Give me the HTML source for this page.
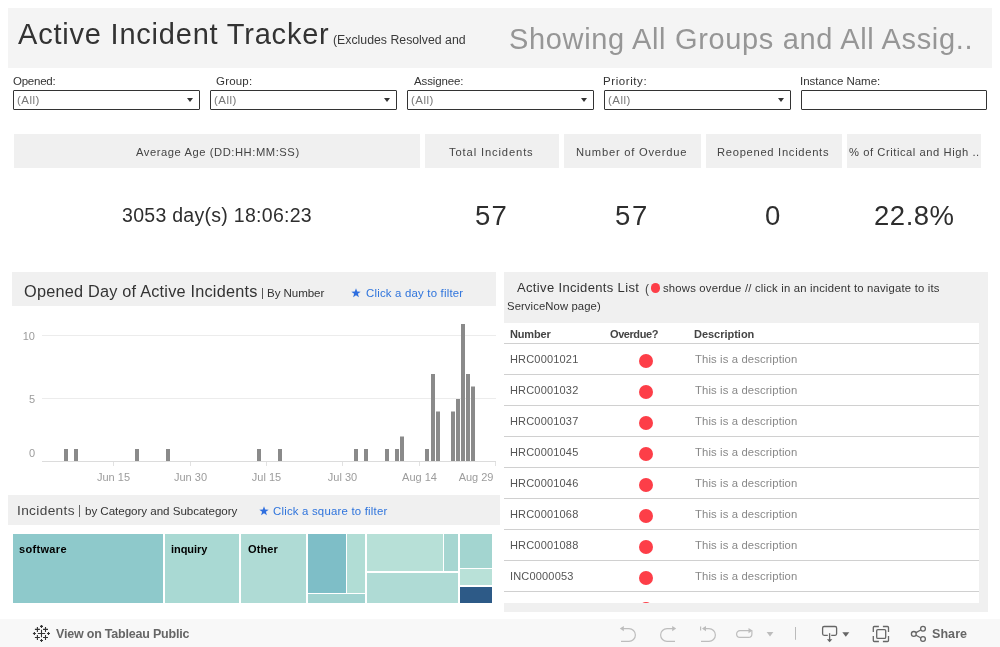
<!DOCTYPE html>
<html><head><meta charset="utf-8">
<style>
*{margin:0;padding:0;box-sizing:border-box}
html,body{width:1000px;height:647px;overflow:hidden;background:#fff}
body{position:relative;font-family:"Liberation Sans",sans-serif;color:#333}
.b{position:absolute}
.t{position:absolute;white-space:pre;line-height:1;will-change:transform}
.fb{position:absolute;top:90px;height:20px;width:187px;border:1px solid #333;border-radius:1px;background:#fff}
.fb i{position:absolute;right:6px;top:7px;width:0;height:0;border-left:3px solid transparent;border-right:3px solid transparent;border-top:4px solid #333}
.dot{position:absolute;width:14px;height:14px;border-radius:50%;background:#fd3e48}
</style></head>
<body>
<div class="b" style="left:8px;top:8px;width:984px;height:60px;background:#f4f4f4"></div>
<div class="t" style="left:18.00px;top:20.00px;font-size:29px;letter-spacing:0.791px;color:#333;">Active Incident Tracker</div>
<div class="t" style="left:333.20px;top:34.20px;font-size:12.3px;letter-spacing:0.000px;color:#3a3a3a;">(Excludes Resolved and</div>
<div class="t" style="left:508.50px;top:25.00px;font-size:29px;letter-spacing:0.661px;color:#969696;">Showing All Groups and All Assig..</div>
<div class="t" style="left:12.50px;top:76.00px;font-size:11.5px;letter-spacing:-0.233px;color:#333;">Opened:</div>
<div class="t" style="left:215.50px;top:76.00px;font-size:11.5px;letter-spacing:0.200px;color:#333;">Group:</div>
<div class="t" style="left:413.80px;top:76.00px;font-size:11.5px;letter-spacing:-0.125px;color:#333;">Assignee:</div>
<div class="t" style="left:602.60px;top:76.00px;font-size:11.5px;letter-spacing:0.575px;color:#333;">Priority:</div>
<div class="t" style="left:799.80px;top:76.00px;font-size:11.5px;letter-spacing:-0.023px;color:#333;">Instance Name:</div>
<div class="fb" style="left:13px"><i></i></div>
<div class="fb" style="left:210px"><i></i></div>
<div class="fb" style="left:407px"><i></i></div>
<div class="fb" style="left:604px"><i></i></div>
<div class="fb" style="left:801px;width:186px"></div>
<div class="t" style="left:16.70px;top:95.00px;font-size:11.5px;letter-spacing:0.450px;color:#777;">(All)</div>
<div class="t" style="left:213.50px;top:95.00px;font-size:11.5px;letter-spacing:0.500px;color:#777;">(All)</div>
<div class="t" style="left:410.60px;top:95.00px;font-size:11.5px;letter-spacing:0.450px;color:#777;">(All)</div>
<div class="t" style="left:607.60px;top:95.00px;font-size:11.5px;letter-spacing:0.450px;color:#777;">(All)</div>
<div class="b" style="left:14px;top:134px;width:406px;height:34px;background:#f0f0f0"></div>
<div class="b" style="left:425px;top:134px;width:134px;height:34px;background:#f0f0f0"></div>
<div class="b" style="left:564px;top:134px;width:137px;height:34px;background:#f0f0f0"></div>
<div class="b" style="left:706px;top:134px;width:136px;height:34px;background:#f0f0f0"></div>
<div class="b" style="left:847px;top:134px;width:134px;height:34px;background:#f0f0f0"></div>
<div class="t" style="left:135.80px;top:146.80px;font-size:11.2px;letter-spacing:0.562px;color:#444;">Average Age (DD:HH:MM:SS)</div>
<div class="t" style="left:449.10px;top:146.80px;font-size:11.2px;letter-spacing:0.871px;color:#444;">Total Incidents</div>
<div class="t" style="left:576.30px;top:146.80px;font-size:11.2px;letter-spacing:0.763px;color:#444;">Number of Overdue</div>
<div class="t" style="left:717.30px;top:146.80px;font-size:11.2px;letter-spacing:0.706px;color:#444;">Reopened Incidents</div>
<div class="t" style="left:849.40px;top:146.80px;font-size:11.2px;letter-spacing:0.554px;color:#444;">% of Critical and High ..</div>
<div class="t" style="left:121.50px;top:206.00px;font-size:19.5px;letter-spacing:0.284px;color:#2e2e2e;">3053 day(s) 18:06:23</div>
<div class="t" style="left:474.50px;top:201.80px;font-size:27.5px;letter-spacing:1.200px;color:#2e2e2e;">57</div>
<div class="t" style="left:615.40px;top:202.00px;font-size:27.5px;letter-spacing:1.600px;color:#2e2e2e;">57</div>
<div class="t" style="left:764.80px;top:202.30px;font-size:27.5px;letter-spacing:0.000px;color:#2e2e2e;">0</div>
<div class="t" style="left:874.40px;top:202.00px;font-size:27.5px;letter-spacing:0.525px;color:#2e2e2e;">22.8%</div>
<div class="b" style="left:12px;top:272px;width:484px;height:34px;background:#f0f0f0"></div>
<div class="t" style="left:23.50px;top:282.70px;font-size:16.3px;letter-spacing:0.214px;color:#333;">Opened Day of Active Incidents</div>
<div class="b" style="left:261.5px;top:288px;width:1px;height:11px;background:#555"></div>
<div class="t" style="left:266.70px;top:287.30px;font-size:11.6px;letter-spacing:-0.087px;color:#333;">By Number</div>
<div class="t" style="left:365.60px;top:288.30px;font-size:11.4px;letter-spacing:0.205px;color:#2f74dc;">Click a day to filter</div>
<svg class="b" style="left:351px;top:288px" width="10" height="10" viewBox="0 0 10 10"><path d="M5 0.3 L6.2 3.6 L9.7 3.7 L6.9 5.8 L7.9 9.3 L5 7.2 L2.1 9.3 L3.1 5.8 L0.3 3.7 L3.8 3.6 Z" fill="#2f6fdf"/></svg>
<svg class="b" style="left:0;top:306px;will-change:transform;font-family:'Liberation Sans',sans-serif" width="500" height="184" viewBox="0 306 500 184">
<line x1="42" y1="335.5" x2="496" y2="335.5" stroke="#ececec" stroke-width="1"/>
<line x1="42" y1="398.5" x2="496" y2="398.5" stroke="#ececec" stroke-width="1"/>
<rect x="64" y="449.0" width="4" height="12.5" fill="#8a8a8a"/>
<rect x="74" y="449.0" width="4" height="12.5" fill="#8a8a8a"/>
<rect x="135" y="449.0" width="4" height="12.5" fill="#8a8a8a"/>
<rect x="166" y="449.0" width="4" height="12.5" fill="#8a8a8a"/>
<rect x="257" y="449.0" width="4" height="12.5" fill="#8a8a8a"/>
<rect x="278" y="449.0" width="4" height="12.5" fill="#8a8a8a"/>
<rect x="354" y="449.0" width="4" height="12.5" fill="#8a8a8a"/>
<rect x="364" y="449.0" width="4" height="12.5" fill="#8a8a8a"/>
<rect x="385" y="449.0" width="4" height="12.5" fill="#8a8a8a"/>
<rect x="395" y="449.0" width="4" height="12.5" fill="#8a8a8a"/>
<rect x="400" y="436.5" width="4" height="25.0" fill="#8a8a8a"/>
<rect x="425" y="449.0" width="4" height="12.5" fill="#8a8a8a"/>
<rect x="431" y="374.0" width="4" height="87.5" fill="#8a8a8a"/>
<rect x="436" y="411.5" width="4" height="50.0" fill="#8a8a8a"/>
<rect x="451" y="411.5" width="4" height="50.0" fill="#8a8a8a"/>
<rect x="456" y="399.0" width="4" height="62.5" fill="#8a8a8a"/>
<rect x="461" y="324.0" width="4" height="137.5" fill="#8a8a8a"/>
<rect x="466" y="374.0" width="4" height="87.5" fill="#8a8a8a"/>
<rect x="471" y="386.5" width="4" height="75.0" fill="#8a8a8a"/>
<line x1="42" y1="461.5" x2="496" y2="461.5" stroke="#dcdcdc" stroke-width="1"/>
<line x1="113.5" y1="462" x2="113.5" y2="466" stroke="#e2e2e2" stroke-width="1"/>
<text x="113.5" y="480.5" text-anchor="middle" font-size="11" fill="#9c9c9c">Jun 15</text>
<line x1="190.5" y1="462" x2="190.5" y2="466" stroke="#e2e2e2" stroke-width="1"/>
<text x="190.5" y="480.5" text-anchor="middle" font-size="11" fill="#9c9c9c">Jun 30</text>
<line x1="266.5" y1="462" x2="266.5" y2="466" stroke="#e2e2e2" stroke-width="1"/>
<text x="266.5" y="480.5" text-anchor="middle" font-size="11" fill="#9c9c9c">Jul 15</text>
<line x1="342.5" y1="462" x2="342.5" y2="466" stroke="#e2e2e2" stroke-width="1"/>
<text x="342.5" y="480.5" text-anchor="middle" font-size="11" fill="#9c9c9c">Jul 30</text>
<line x1="419.5" y1="462" x2="419.5" y2="466" stroke="#e2e2e2" stroke-width="1"/>
<text x="419.5" y="480.5" text-anchor="middle" font-size="11" fill="#9c9c9c">Aug 14</text>
<line x1="495.5" y1="462" x2="495.5" y2="466" stroke="#e2e2e2" stroke-width="1"/>
<text x="493.5" y="480.5" text-anchor="end" font-size="11" fill="#9c9c9c">Aug 29</text>
<text x="35" y="339.5" text-anchor="end" font-size="11" fill="#9c9c9c">10</text>
<text x="35" y="402.5" text-anchor="end" font-size="11" fill="#9c9c9c">5</text>
<text x="35" y="457" text-anchor="end" font-size="11" fill="#9c9c9c">0</text>

</svg>
<div class="b" style="left:8px;top:495px;width:492px;height:30px;background:#f0f0f0"></div>
<div class="t" style="left:17.40px;top:503.80px;font-size:13.7px;letter-spacing:0.350px;color:#444;">Incidents</div>
<div class="b" style="left:79px;top:505px;width:1px;height:12px;background:#666"></div>
<div class="t" style="left:84.60px;top:504.80px;font-size:11.6px;letter-spacing:-0.038px;color:#333;">by Category and Subcategory</div>
<svg class="b" style="left:259px;top:506px" width="10" height="10" viewBox="0 0 10 10"><path d="M5 0.3 L6.2 3.6 L9.7 3.7 L6.9 5.8 L7.9 9.3 L5 7.2 L2.1 9.3 L3.1 5.8 L0.3 3.7 L3.8 3.6 Z" fill="#2f6fdf"/></svg>
<div class="t" style="left:273.00px;top:505.80px;font-size:11.4px;letter-spacing:0.204px;color:#2f74dc;">Click a square to filter</div>
<div class="b" style="left:13px;top:534px;width:150px;height:69px;background:#8ec9cb"></div>
<div class="b" style="left:165px;top:534px;width:74px;height:69px;background:#a9d9d3"></div>
<div class="b" style="left:241px;top:534px;width:65px;height:69px;background:#afdbd5"></div>
<div class="b" style="left:308px;top:534px;width:38px;height:59px;background:#7ebec7"></div>
<div class="b" style="left:347px;top:534px;width:18px;height:59px;background:#b1ddd5"></div>
<div class="b" style="left:308px;top:594px;width:57px;height:9px;background:#a1d3d0"></div>
<div class="b" style="left:367px;top:534px;width:76px;height:37px;background:#b7e0d7"></div>
<div class="b" style="left:444px;top:534px;width:14px;height:37px;background:#a6d6d1"></div>
<div class="b" style="left:367px;top:573px;width:91px;height:30px;background:#afdbd5"></div>
<div class="b" style="left:460px;top:534px;width:32px;height:34px;background:#a3d5d0"></div>
<div class="b" style="left:460px;top:569px;width:32px;height:16px;background:#b9e1d8"></div>
<div class="b" style="left:460px;top:587px;width:32px;height:16px;background:#2d5a87"></div>
<div class="t" style="left:19.30px;top:543.70px;font-size:11px;font-weight:700;letter-spacing:0.329px;color:#000;">software</div>
<div class="t" style="left:171.40px;top:543.60px;font-size:11px;font-weight:700;letter-spacing:-0.067px;color:#000;">inquiry</div>
<div class="t" style="left:248.40px;top:543.60px;font-size:11px;font-weight:700;letter-spacing:0.100px;color:#000;">Other</div>
<div class="b" style="left:504px;top:272px;width:484px;height:340px;background:#f0f0f0"></div>
<div class="t" style="left:517.20px;top:280.80px;font-size:13px;letter-spacing:0.350px;color:#333;">Active Incidents List</div>
<div class="t" style="left:645px;top:282.5px;font-size:12px;color:#444">(</div>
<div class="t" style="left:662.50px;top:283.00px;font-size:11.3px;letter-spacing:0.198px;color:#333;">shows overdue // click in an incident to navigate to its</div>
<div class="t" style="left:507.40px;top:301.20px;font-size:11.3px;letter-spacing:0.093px;color:#333;">ServiceNow page)</div>
<div class="dot" style="left:650.5px;top:283px;width:9.5px;height:9.5px"></div>
<div class="b" style="left:504px;top:323px;width:475px;height:280px;background:#fff;overflow:hidden">
<div class="b" style="left:0;top:0;width:475px;height:280px">
<div class="t" style="left:5.70px;top:5.80px;font-size:11px;font-weight:700;letter-spacing:-0.160px;color:#444">Number</div>
<div class="t" style="left:106.40px;top:5.80px;font-size:11px;font-weight:700;letter-spacing:-0.429px;color:#444">Overdue?</div>
<div class="t" style="left:189.60px;top:5.80px;font-size:11px;font-weight:700;letter-spacing:-0.020px;color:#444">Description</div>
<div class="b" style="left:0;top:20px;width:475px;height:1px;background:#d0d0d0"></div>
<div class="t" style="left:5.80px;top:30.80px;font-size:11px;letter-spacing:0.178px;color:#555">HRC0001021</div>
<div class="t" style="left:190.80px;top:30.60px;font-size:11.3px;letter-spacing:0.120px;color:#888">This is a description</div>
<div class="dot" style="left:134.5px;top:31px"></div>
<div class="b" style="left:0;top:51px;width:475px;height:1px;background:#d0d0d0"></div>
<div class="t" style="left:5.80px;top:61.80px;font-size:11px;letter-spacing:0.178px;color:#555">HRC0001032</div>
<div class="t" style="left:190.80px;top:61.60px;font-size:11.3px;letter-spacing:0.120px;color:#888">This is a description</div>
<div class="dot" style="left:134.5px;top:62px"></div>
<div class="b" style="left:0;top:82px;width:475px;height:1px;background:#d0d0d0"></div>
<div class="t" style="left:5.80px;top:92.80px;font-size:11px;letter-spacing:0.178px;color:#555">HRC0001037</div>
<div class="t" style="left:190.80px;top:92.60px;font-size:11.3px;letter-spacing:0.120px;color:#888">This is a description</div>
<div class="dot" style="left:134.5px;top:93px"></div>
<div class="b" style="left:0;top:113px;width:475px;height:1px;background:#d0d0d0"></div>
<div class="t" style="left:5.80px;top:123.80px;font-size:11px;letter-spacing:0.178px;color:#555">HRC0001045</div>
<div class="t" style="left:190.80px;top:123.60px;font-size:11.3px;letter-spacing:0.120px;color:#888">This is a description</div>
<div class="dot" style="left:134.5px;top:124px"></div>
<div class="b" style="left:0;top:144px;width:475px;height:1px;background:#d0d0d0"></div>
<div class="t" style="left:5.80px;top:154.80px;font-size:11px;letter-spacing:0.178px;color:#555">HRC0001046</div>
<div class="t" style="left:190.80px;top:154.60px;font-size:11.3px;letter-spacing:0.120px;color:#888">This is a description</div>
<div class="dot" style="left:134.5px;top:155px"></div>
<div class="b" style="left:0;top:175px;width:475px;height:1px;background:#d0d0d0"></div>
<div class="t" style="left:5.80px;top:185.80px;font-size:11px;letter-spacing:0.178px;color:#555">HRC0001068</div>
<div class="t" style="left:190.80px;top:185.60px;font-size:11.3px;letter-spacing:0.120px;color:#888">This is a description</div>
<div class="dot" style="left:134.5px;top:186px"></div>
<div class="b" style="left:0;top:206px;width:475px;height:1px;background:#d0d0d0"></div>
<div class="t" style="left:5.80px;top:216.80px;font-size:11px;letter-spacing:0.178px;color:#555">HRC0001088</div>
<div class="t" style="left:190.80px;top:216.60px;font-size:11.3px;letter-spacing:0.120px;color:#888">This is a description</div>
<div class="dot" style="left:134.5px;top:217px"></div>
<div class="b" style="left:0;top:237px;width:475px;height:1px;background:#d0d0d0"></div>
<div class="t" style="left:5.80px;top:247.80px;font-size:11px;letter-spacing:0.178px;color:#555">INC0000053</div>
<div class="t" style="left:190.80px;top:247.60px;font-size:11.3px;letter-spacing:0.120px;color:#888">This is a description</div>
<div class="dot" style="left:134.5px;top:248px"></div>
<div class="b" style="left:0;top:268px;width:475px;height:1px;background:#d0d0d0"></div>
<div class="t" style="left:5.80px;top:278.80px;font-size:11px;letter-spacing:0.178px;color:#555">INC0000054</div>
<div class="t" style="left:190.80px;top:278.60px;font-size:11.3px;letter-spacing:0.120px;color:#888">This is a description</div>
<div class="dot" style="left:134.5px;top:279px"></div>
<div class="b" style="left:0;top:299px;width:475px;height:1px;background:#d0d0d0"></div>
</div></div>
<div class="b" style="left:0;top:619px;width:1000px;height:28px;background:#f8f8f8"></div>
<svg class="b" style="left:0;top:619px" width="1000" height="28" viewBox="0 619 1000 28">
<g stroke="#333" stroke-width="1.1" fill="none">
<path d="M37.8 633.5h7.4M41.5 629.8v7.4"/>
<path d="M34.9 629.4h5M37.4 626.9v5M43 629.4h5M45.5 626.9v5M34.9 637.5h5M37.4 635v5M43 637.5h5M45.5 635v5"/>
<path d="M40 626.4h3M41.5 624.9v3M40 640.5h3M41.5 639v3M32.9 633.5h3M34.4 632v3M47 633.5h3M48.5 632v3"/>
</g>
<g stroke="#bdbdbd" stroke-width="1.2" fill="none">
<path d="M622 628.6h7a6.4 6.4 0 0 1 0 12.8h-8"/>
<path d="M674 628.6h-7a6.4 6.4 0 0 0 0 12.8h8"/>
<path d="M703 628.6h6a6.4 6.4 0 0 1 0 12.8h-8M700.6 626.6v4"/>
<path d="M749 630.6h-9a3.4 3.4 0 0 0 0 6.8h8.5a3.4 3.4 0 0 0 3.4-3.4v-3.4"/>
</g>
<g fill="#bdbdbd">
<path d="M619.8 628.6l4-2.6v5.2z"/>
<path d="M676.2 628.6l-4-2.6v5.2z"/>
<path d="M702 628.6l4-2.6v5.2z"/>
<path d="M752.5 630.6l-4-2.6v5.2z"/>
<path d="M766.6 632h6.8l-3.4 4.6z"/>
</g>
<path d="M795.5 627v12.8" stroke="#bbb" stroke-width="1"/>
<g stroke="#666" stroke-width="1.3" fill="none">
<path d="M827.8 635.3h-3.7a1.5 1.5 0 0 1 -1.5 -1.5v-5.8a1.5 1.5 0 0 1 1.5 -1.5h11a1.5 1.5 0 0 1 1.5 1.5v5.8a1.5 1.5 0 0 1 -1.5 1.5h-3.9"/>
<path d="M829.6 633.2v7.5"/>
<path d="M873.3 632.1v-4.6a1 1 0 0 1 1-1h4.6M882.9 626.5h4.6a1 1 0 0 1 1 1v4.6M888.5 636v4.5a1 1 0 0 1 -1 1h-4.6M878.9 641.5h-4.6a1 1 0 0 1 -1-1v-4.5"/>
<rect x="876.7" y="629.6" width="9" height="8.8" rx="1.2"/>
<path d="M916 632.6l4.7-2.6M916 635.2l4.7 2.6"/>
<circle cx="913.8" cy="633.9" r="2.4"/>
<circle cx="923" cy="628.8" r="2.4"/>
<circle cx="923" cy="639" r="2.4"/>
</g>
<g fill="#666">
<path d="M826.9 639.3l2.7 3 2.7-3z"/>
<path d="M842.3 632.2h7l-3.5 4.5z"/>
</g>
</svg>

<div class="t" style="left:55.60px;top:627.90px;font-size:12.5px;font-weight:700;letter-spacing:-0.205px;color:#666;">View on Tableau Public</div>
<div class="t" style="left:931.80px;top:627.90px;font-size:12.5px;font-weight:700;letter-spacing:0.075px;color:#666;">Share</div>
</body></html>
